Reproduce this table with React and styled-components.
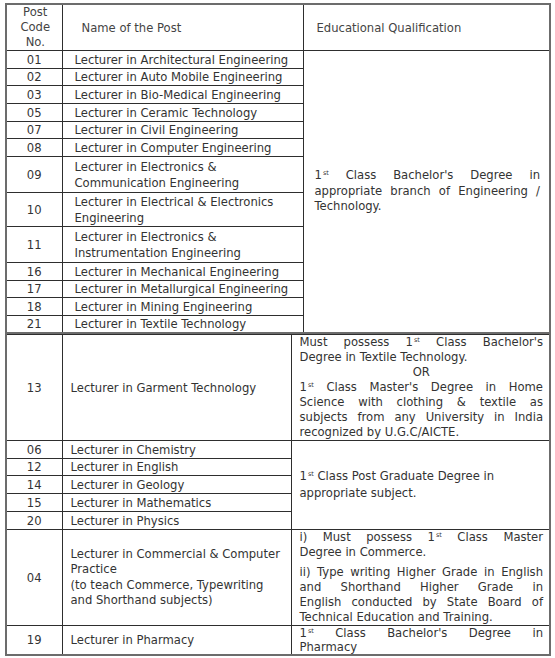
import styled, { createGlobalStyle } from "styled-components";

const GlobalStyle = createGlobalStyle`
  body {
    margin: 0;
    background: #fff;
    font-family: "DejaVu Sans", "Liberation Sans", sans-serif;
  }
`;

const engineeringPosts = [
  { code: "01", name: ["Lecturer in Architectural Engineering"], h: 18 },
  { code: "02", name: ["Lecturer in Auto Mobile Engineering"], h: 17 },
  { code: "03", name: ["Lecturer in Bio-Medical Engineering"], h: 18 },
  { code: "05", name: ["Lecturer in Ceramic Technology"], h: 18 },
  { code: "07", name: ["Lecturer in Civil Engineering"], h: 17 },
  { code: "08", name: ["Lecturer in Computer Engineering"], h: 18 },
  { code: "09", name: ["Lecturer in Electronics &", "Communication Engineering"], h: 36 },
  { code: "10", name: ["Lecturer in Electrical & Electronics", "Engineering"], h: 34 },
  { code: "11", name: ["Lecturer in Electronics &", "Instrumentation Engineering"], h: 36 },
  { code: "16", name: ["Lecturer in Mechanical Engineering"], h: 18 },
  { code: "17", name: ["Lecturer in Metallurgical Engineering"], h: 17 },
  { code: "18", name: ["Lecturer in Mining Engineering"], h: 18 },
  { code: "21", name: ["Lecturer in Textile Technology"], h: 17 },
];

const sciencePosts = [
  { code: "06", name: "Lecturer in Chemistry", h: 18 },
  { code: "12", name: "Lecturer in English", h: 17 },
  { code: "14", name: "Lecturer in Geology", h: 18 },
  { code: "15", name: "Lecturer in Mathematics", h: 18 },
  { code: "20", name: "Lecturer in Physics", h: 18 },
];

const First = () => (
  <>
    1<Sup>st</Sup>
  </>
);

export default function App() {
  return (
    <>
      <GlobalStyle />
      <Page>
        <Sheet>
          <colgroup>
            <Col $w={56} />
            <Col $w={241} />
            <Col $w={247} />
          </colgroup>
          <thead>
            <Row $h={45}>
              <HeadCell $align="center" $lh={15}>
                Post
                <br />
                Code
                <br />
                No.
              </HeadCell>
              <HeadCell $padL={19}>Name of the Post</HeadCell>
              <HeadCell $padL={13}>Educational Qualification</HeadCell>
            </Row>
          </thead>
          <tbody>
            {engineeringPosts.map((post, i) => (
              <Row key={post.code} $h={post.h}>
                <Cell $align="center" $padL={0} $padR={0}>
                  {post.code}
                </Cell>
                <Cell $padL={12} $lh={16}>
                  {post.name.map((line) => (
                    <Line key={line}>{line}</Line>
                  ))}
                </Cell>
                {i === 0 && (
                  <Cell rowSpan={engineeringPosts.length} $padL={11} $padR={9} $lh={15.5}>
                    <Line $justify>
                      <First /> Class Bachelor's Degree in
                    </Line>
                    <Line $justify>appropriate branch of Engineering /</Line>
                    <Line>Technology.</Line>
                  </Cell>
                )}
              </Row>
            ))}
          </tbody>
        </Sheet>

        <Sheet $joined>
          <colgroup>
            <Col $w={56} />
            <Col $w={229} />
            <Col $w={259} />
          </colgroup>
          <tbody>
            <Row $h={106}>
              <Cell $align="center" $padL={0} $padR={0}>
                13
              </Cell>
              <Cell>Lecturer in Garment Technology</Cell>
              <Cell $lh={15}>
                <Line $justify>
                  Must possess <First /> Class Bachelor's
                </Line>
                <Line>Degree in Textile Technology.</Line>
                <Line $center>OR</Line>
                <Line $justify>
                  <First /> Class Master's Degree in Home
                </Line>
                <Line $justify>Science with clothing &amp; textile as</Line>
                <Line $justify>subjects from any University in India</Line>
                <Line>recognized by U.G.C/AICTE.</Line>
              </Cell>
            </Row>

            {sciencePosts.map((post, i) => (
              <Row key={post.code} $h={post.h}>
                <Cell $align="center" $padL={0} $padR={0}>
                  {post.code}
                </Cell>
                <Cell>{post.name}</Cell>
                {i === 0 && (
                  <Cell rowSpan={sciencePosts.length} $lh={17}>
                    <Line>
                      <First /> Class Post Graduate Degree in
                    </Line>
                    <Line>appropriate subject.</Line>
                  </Cell>
                )}
              </Row>
            ))}

            <Row $h={96}>
              <Cell $align="center" $padL={0} $padR={0}>
                04
              </Cell>
              <Cell $lh={15.5}>
                <Line>Lecturer in Commercial &amp; Computer</Line>
                <Line>Practice</Line>
                <Line>(to teach Commerce, Typewriting</Line>
                <Line>and Shorthand subjects)</Line>
              </Cell>
              <Cell $lh={15}>
                <Para>
                  <Line $justify>
                    i) Must possess <First /> Class Master
                  </Line>
                  <Line>Degree in Commerce.</Line>
                </Para>
                <Para>
                  <Line $justify>ii) Type writing Higher Grade in English</Line>
                  <Line $justify>and Shorthand Higher Grade in</Line>
                  <Line $justify>English conducted by State Board of</Line>
                  <Line>Technical Education and Training.</Line>
                </Para>
              </Cell>
            </Row>

            <Row $h={29}>
              <Cell $align="center" $padL={0} $padR={0}>
                19
              </Cell>
              <Cell>Lecturer in Pharmacy</Cell>
              <Cell $lh={14}>
                <Line $justify>
                  <First /> Class Bachelor's Degree in
                </Line>
                <Line>Pharmacy</Line>
              </Cell>
            </Row>
          </tbody>
        </Sheet>
      </Page>
    </>
  );
}

const Page = styled.main`
  padding: 3px 6px 3px 5px;
`;

const Sheet = styled.table`
  width: 544px;
  border-collapse: collapse;
  table-layout: fixed;
  border: 2px solid #6c6c6c;
  ${({ $joined }) => $joined && "border-top: 0;"}
  font-size: 11.6px;
  color: #333;
`;

const Col = styled.col`
  width: ${({ $w }) => $w}px;
`;

const Row = styled.tr`
  height: ${({ $h }) => $h}px;
`;

const Cell = styled.td`
  border: 1px solid #2e2e2e;
  padding: 0 ${({ $padR }) => $padR ?? 6}px 0 ${({ $padL }) => $padL ?? 8}px;
  text-align: ${({ $align }) => $align || "left"};
  vertical-align: middle;
  line-height: ${({ $lh }) => $lh || 16}px;
  overflow: hidden;
`;

const HeadCell = styled(Cell).attrs({ as: "th" })`
  font-weight: normal;
  color: #444;
`;

const Line = styled.span`
  display: block;
  text-align: ${({ $justify, $center }) =>
    $justify ? "justify" : $center ? "center" : "inherit"};
  text-align-last: ${({ $justify, $center }) =>
    $justify ? "justify" : $center ? "center" : "auto"};
  white-space: ${({ $justify }) => ($justify ? "normal" : "nowrap")};
`;

const Para = styled.div`
  & + & {
    margin-top: 5px;
  }
`;

const Sup = styled.sup`
  font-size: 6.5px;
  line-height: 0;
  vertical-align: 0;
  position: relative;
  top: -4px;
  margin-left: 1px;
`;
